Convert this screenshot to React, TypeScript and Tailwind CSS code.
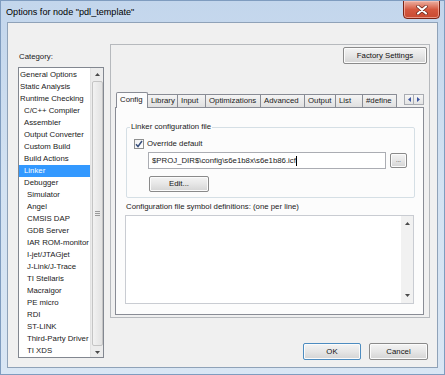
import React from "react";

const items: [string, number][] = [
  ["General Options", 0],
  ["Static Analysis", 0],
  ["Runtime Checking", 0],
  ["C/C++ Compiler", 1],
  ["Assembler", 1],
  ["Output Converter", 1],
  ["Custom Build", 1],
  ["Build Actions", 1],
  ["Linker", 1],
  ["Debugger", 1],
  ["Simulator", 2],
  ["Angel", 2],
  ["CMSIS DAP", 2],
  ["GDB Server", 2],
  ["IAR ROM-monitor", 2],
  ["I-jet/JTAGjet", 2],
  ["J-Link/J-Trace", 2],
  ["TI Stellaris", 2],
  ["Macraigor", 2],
  ["PE micro", 2],
  ["RDI", 2],
  ["ST-LINK", 2],
  ["Third-Party Driver", 2],
  ["TI XDS", 2],
];

const tabs: [string, number][] = [
  ["Config", 30],
  ["Library", 31],
  ["Input", 29],
  ["Optimizations", 56],
  ["Advanced", 45],
  ["Output", 32],
  ["List", 28],
  ["#define", 35],
];

function Btn({
  className,
  children,
  def,
}: {
  className: string;
  children?: React.ReactNode;
  def?: boolean;
}) {
  return (
    <div
      className={
        "flex items-center justify-center rounded-[2px] border bg-gradient-to-b from-[#f4f4f4] via-[#e6e6e6] to-[#d4d4d4] shadow-[inset_0_0_0_1px_#fbfbfb] text-[#111] " +
        (def ? "border-[#4d8cc0]" : "border-[#8a8a8a]") +
        " " +
        className
      }
    >
      {children}
    </div>
  );
}

function Tri({ up, className }: { up: boolean; className?: string }) {
  return (
    <svg width="5" height="3" viewBox="0 0 5 3" className={className}>
      {up ? <polygon points="0,3 5,3 2.5,0" fill="#4a4a4a" /> : <polygon points="0,0 5,0 2.5,3" fill="#4a4a4a" />}
    </svg>
  );
}

export default function App() {
  return (
    <div
      className="w-[445px] h-[375px] overflow-hidden flex flex-col bg-gradient-to-b from-[#c3d6ec] via-[#d3e2f2] to-[#d9e6f4] border border-[#7f9cbf] text-[7.8px] leading-[10px] text-[#1a1a1a]"
      style={{ fontFamily: '"Liberation Sans", Arial, sans-serif' }}
    >
      {/* title bar */}
      <div className="h-[21px] flex items-start shrink-0">
        <div className="pl-[5px] pt-[6px] text-[9.1px] leading-[11px] text-black">
          Options for node "pdl_template"
        </div>
        <div className="ml-auto mr-[4px] -mt-[1px] w-[37px] h-[19px] rounded-b-[4px] border border-[#7a2414] bg-gradient-to-b from-[#eab0a2] via-[#d5583f] to-[#c84a30] shadow-[inset_0_0_0_1px_rgba(255,200,190,0.6)] flex items-center justify-center">
          <svg width="12" height="10" viewBox="0 0 12 10">
            <path d="M2 1.5 L10 8.5 M10 1.5 L2 8.5" stroke="#5a1a10" strokeWidth="3.4" strokeLinecap="round" />
            <path d="M2 1.5 L10 8.5 M10 1.5 L2 8.5" stroke="#ffffff" strokeWidth="2.2" strokeLinecap="round" />
          </svg>
        </div>
      </div>

      {/* client area */}
      <div className="ml-[6px] mr-[6px] mb-[6px] flex-1 border border-[#8fa2b8] bg-[#f0f0f0] flex">
        {/* left column */}
        <div className="ml-[10px] w-[86px] flex flex-col">
          <div className="mt-[29px] h-[10px] pl-[1px]">Category:</div>
          <div className="mt-[5px] h-[291px] border border-[#828790] bg-white flex">
            <div className="flex-1 pt-[1px]">
              {items.map(([name, lvl]) => (
                <div
                  key={name}
                  className={
                    "h-[12px] flex items-center whitespace-nowrap " +
                    (name === "Linker" ? "bg-[#3399ff] text-white " : "") +
                    (lvl === 0 ? "pl-[1px]" : lvl === 1 ? "pl-[5px]" : "pl-[8px]")
                  }
                >
                  {name}
                </div>
              ))}
            </div>
            <div className="w-[13px] bg-[#ececec] border-l border-[#e2e2e2] flex flex-col items-center">
              <div className="h-[12px] flex items-center justify-center">
                <Tri up />
              </div>
              <div className="flex-1 w-[11px] mt-[1px] mb-[1px] rounded-[2px] border border-[#c4c4c4] bg-gradient-to-r from-[#f2f2f2] to-[#e2e2e2] flex items-center justify-center">
                <div className="flex flex-col gap-[1px]">
                  <div className="w-[5px] h-[1px] bg-[#9a9a9a]" />
                  <div className="w-[5px] h-[1px] bg-[#9a9a9a]" />
                  <div className="w-[5px] h-[1px] bg-[#9a9a9a]" />
                </div>
              </div>
              <div className="h-[10px] flex items-center justify-center">
                <Tri up={false} />
              </div>
            </div>
          </div>
        </div>

        {/* right column */}
        <div className="ml-[6px] w-[320px] flex flex-col">
          <div className="mt-[21px] h-[274px] border border-[#b6b9bd] bg-[#f0f0f0] flex flex-col">
            <div className="flex justify-end pr-[2px] pt-[2px]">
              <Btn className="w-[84px] h-[17px]">Factory Settings</Btn>
            </div>
            {/* tab strip */}
            <div className="mt-[28px] ml-[4px] mr-[5px] h-[15px] flex items-end relative z-10">
              <div className="w-[2px]" />
              {tabs.map(([t, w]) =>
                t === "Config" ? (
                  <div
                    key={t}
                    style={{ width: w + 2 }}
                    className="-ml-[1px] h-[16px] -mb-[1px] border border-b-0 border-[#898c95] bg-[#fcfcfc] pl-[3px] pt-[2px] rounded-t-[2px]"
                  >
                    {t}
                  </div>
                ) : (
                  <div
                    key={t}
                    style={{ width: w }}
                    className="-ml-[1px] h-[13px] border border-b-0 border-[#898c95] bg-gradient-to-b from-[#f4f4f4] to-[#e0e0e0] pl-[3px] pt-[1px] whitespace-nowrap overflow-hidden rounded-t-[1px]"
                  >
                    {t}
                  </div>
                )
              )}
              <div className="ml-auto mb-[2px] flex">
                <div className="w-[10px] h-[11px] border border-[#a9acb2] bg-gradient-to-b from-[#f6f6f6] to-[#e4e4e4] flex items-center justify-center">
                  <svg width="3" height="5" viewBox="0 0 3 5">
                    <polygon points="3,0 3,5 0,2.5" fill="#3c55a0" />
                  </svg>
                </div>
                <div className="w-[10px] h-[11px] border border-l-0 border-[#a9acb2] bg-gradient-to-b from-[#f6f6f6] to-[#e4e4e4] flex items-center justify-center">
                  <svg width="3" height="5" viewBox="0 0 3 5">
                    <polygon points="0,0 0,5 3,2.5" fill="#3c55a0" />
                  </svg>
                </div>
              </div>
            </div>
            {/* tab page */}
            <div className="ml-[4px] mr-[5px] mb-[2px] flex-1 border border-[#898c95] bg-[#fcfcfc] flex flex-col">
              <fieldset className="mt-[14px] ml-[10px] mr-[8px] border border-[#d5dfe5] rounded-[2px] pb-[5px]">
                <legend className="ml-[3px] px-[1px] leading-[10px]">Linker configuration file</legend>
                <div className="mt-[7px] ml-[7px] h-[10px] flex items-center">
                  <div className="w-[10px] h-[10px] border border-[#8e8f8f] bg-gradient-to-br from-[#f0f0f0] to-[#ffffff] flex items-center justify-center">
                    <svg width="8" height="8" viewBox="0 0 8 8">
                      <path d="M1 4.2 L3 6.5 L7 1" stroke="#39507c" strokeWidth="1.5" fill="none" />
                    </svg>
                  </div>
                  <div className="ml-[3px]">Override default</div>
                </div>
                <div className="mt-[3px] ml-[21px] flex items-center">
                  <div className="w-[238px] h-[17px] border border-[#abadb3] bg-white flex items-center pl-[3px] whitespace-nowrap">
                    $PROJ_DIR$\config\s6e1b8x\s6e1b86.icf
                    <div className="w-[1px] h-[10px] bg-black" />
                  </div>
                  <Btn className="ml-[4px] w-[17px] h-[15px] text-[6px] leading-[6px] pb-[2px]">...</Btn>
                </div>
                <Btn className="mt-[7px] ml-[22px] w-[60px] h-[16px]">Edit...</Btn>
              </fieldset>
              <div className="mt-[4px] ml-[10px] h-[10px]">
                Configuration file symbol definitions: (one per line)
              </div>
              <div className="mt-[3px] ml-[9px] w-[289px] h-[89px] border border-[#c9ccd2] bg-white flex justify-end">
                <div className="w-[12px] bg-[#f1f1f1] flex flex-col items-center justify-between py-[6px]">
                  <Tri up />
                  <Tri up={false} />
                </div>
              </div>
            </div>
          </div>
          <div className="mt-[25px] flex justify-end pr-[2px] gap-[8px]">
            <Btn def className="w-[58px] h-[17px]">OK</Btn>
            <Btn className="w-[59px] h-[17px]">Cancel</Btn>
          </div>
        </div>
      </div>
    </div>
  );
}
